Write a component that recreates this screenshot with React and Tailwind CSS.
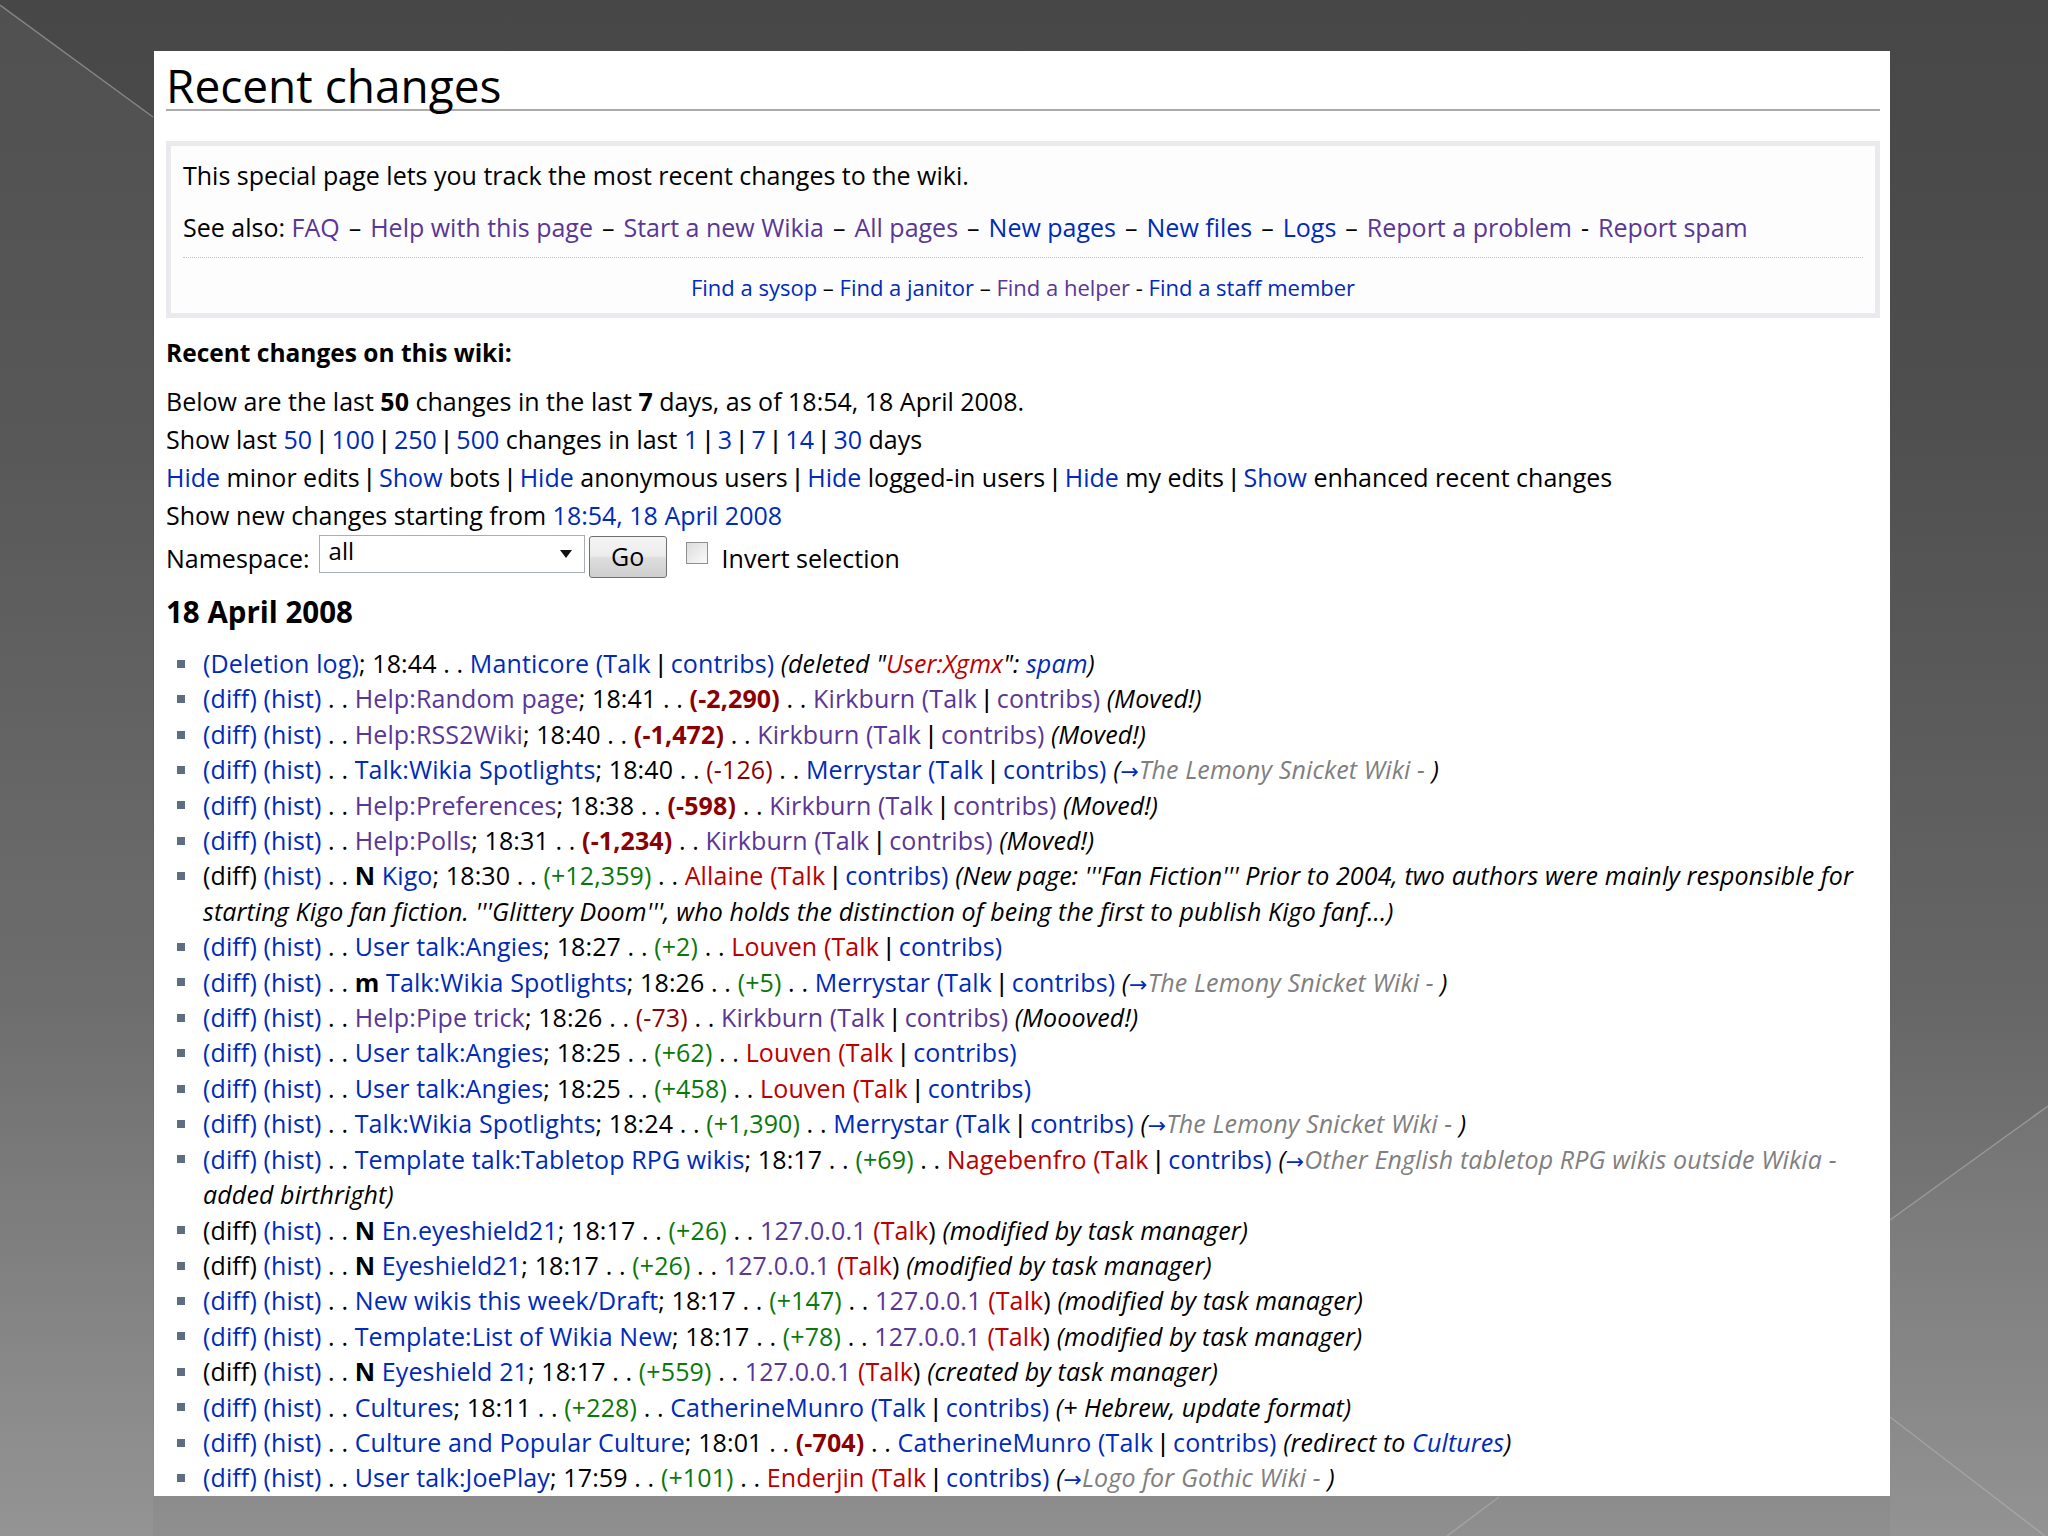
import React from 'react';

// link colours: b = unvisited, v = visited, r = missing page
const tone = {
  b: 'text-[#002bb8]',
  v: 'text-[#5a3696]',
  r: 'text-[#ba0000]',
};

function A({ c = 'b', children }) {
  return <a className={tone[c]}>{children}</a>;
}

// narrow pipe, the Open Sans one is far too wide
function P() {
  return <span className="font-['Liberation_Sans',sans-serif] leading-[0px]">|</span>;
}

function D({ ch = '–' }) {
  return <span className="mx-[2.5px]">{ch}</span>;
}

function Arrow() {
  return (
    <span className="text-[#002bb8] not-italic font-['DejaVu_Sans',sans-serif] text-[22px] leading-[0px]">→</span>
  );
}

function Size({ v, bold }) {
  const neg = v.startsWith('-');
  return (
    <span className={`${neg ? 'text-[#8b0000]' : 'text-[#0a780a]'} ${bold ? 'font-bold' : ''}`}>({v})</span>
  );
}

function Auto({ text }) {
  return (
    <i>
      (<Arrow />
      <span className="text-[#7f7f7f]">{text}</span>)
    </i>
  );
}

const rows = [
  { diff: 'b', title: 'Help:Random page', tc: 'v', time: '18:41', size: '-2,290', bold: true, user: 'Kirkburn', uc: 'v', talk: 'v', contribs: 'v', comment: <i>(Moved!)</i> },
  { diff: 'b', title: 'Help:RSS2Wiki', tc: 'v', time: '18:40', size: '-1,472', bold: true, user: 'Kirkburn', uc: 'v', talk: 'v', contribs: 'v', comment: <i>(Moved!)</i> },
  { diff: 'b', title: 'Talk:Wikia Spotlights', tc: 'b', time: '18:40', size: '-126', user: 'Merrystar', uc: 'b', talk: 'b', contribs: 'b', comment: <Auto text="The Lemony Snicket Wiki - " /> },
  { diff: 'b', title: 'Help:Preferences', tc: 'v', time: '18:38', size: '-598', bold: true, user: 'Kirkburn', uc: 'v', talk: 'v', contribs: 'v', comment: <i>(Moved!)</i> },
  { diff: 'b', title: 'Help:Polls', tc: 'v', time: '18:31', size: '-1,234', bold: true, user: 'Kirkburn', uc: 'v', talk: 'v', contribs: 'v', comment: <i>(Moved!)</i> },
  {
    diff: null, flag: 'N', title: 'Kigo', tc: 'b', time: '18:30', size: '+12,359', user: 'Allaine', uc: 'r', talk: 'r', contribs: 'b',
    comment: (
      <i>
        (New page: '''Fan Fiction''' Prior to 2004, two authors were mainly responsible for starting Kigo fan fiction. '''Glittery Doom''', who holds the distinction of being the first to publish Kigo fanf...)
      </i>
    ),
  },
  { diff: 'b', title: 'User talk:Angies', tc: 'b', time: '18:27', size: '+2', user: 'Louven', uc: 'r', talk: 'r', contribs: 'b' },
  { diff: 'b', flag: 'm', title: 'Talk:Wikia Spotlights', tc: 'b', time: '18:26', size: '+5', user: 'Merrystar', uc: 'b', talk: 'b', contribs: 'b', comment: <Auto text="The Lemony Snicket Wiki - " /> },
  { diff: 'b', title: 'Help:Pipe trick', tc: 'v', time: '18:26', size: '-73', user: 'Kirkburn', uc: 'v', talk: 'v', contribs: 'v', comment: <i>(Moooved!)</i> },
  { diff: 'b', title: 'User talk:Angies', tc: 'b', time: '18:25', size: '+62', user: 'Louven', uc: 'r', talk: 'r', contribs: 'b' },
  { diff: 'b', title: 'User talk:Angies', tc: 'b', time: '18:25', size: '+458', user: 'Louven', uc: 'r', talk: 'r', contribs: 'b' },
  { diff: 'b', title: 'Talk:Wikia Spotlights', tc: 'b', time: '18:24', size: '+1,390', user: 'Merrystar', uc: 'b', talk: 'b', contribs: 'b', comment: <Auto text="The Lemony Snicket Wiki - " /> },
  {
    diff: 'b', title: 'Template talk:Tabletop RPG wikis', tc: 'b', time: '18:17', size: '+69', user: 'Nagebenfro', uc: 'r', talk: 'r', contribs: 'b',
    comment: (
      <i>
        (<Arrow />
        <span className="text-[#7f7f7f]">Other English tabletop RPG wikis outside Wikia -</span> added birthright)
      </i>
    ),
  },
  { diff: null, flag: 'N', title: 'En.eyeshield21', tc: 'b', time: '18:17', size: '+26', user: '127.0.0.1', uc: 'v', talk: 'r', comment: <i>(modified by task manager)</i> },
  { diff: null, flag: 'N', title: 'Eyeshield21', tc: 'b', time: '18:17', size: '+26', user: '127.0.0.1', uc: 'v', talk: 'r', comment: <i>(modified by task manager)</i> },
  { diff: 'b', title: 'New wikis this week/Draft', tc: 'b', time: '18:17', size: '+147', user: '127.0.0.1', uc: 'v', talk: 'r', comment: <i>(modified by task manager)</i> },
  { diff: 'b', title: 'Template:List of Wikia New', tc: 'b', time: '18:17', size: '+78', user: '127.0.0.1', uc: 'v', talk: 'r', comment: <i>(modified by task manager)</i> },
  { diff: null, flag: 'N', title: 'Eyeshield 21', tc: 'b', time: '18:17', size: '+559', user: '127.0.0.1', uc: 'v', talk: 'r', comment: <i>(created by task manager)</i> },
  { diff: 'b', title: 'Cultures', tc: 'b', time: '18:11', size: '+228', user: 'CatherineMunro', uc: 'b', talk: 'b', contribs: 'b', comment: <i>(+ Hebrew, update format)</i> },
  {
    diff: 'b', title: 'Culture and Popular Culture', tc: 'b', time: '18:01', size: '-704', bold: true, user: 'CatherineMunro', uc: 'b', talk: 'b', contribs: 'b',
    comment: (
      <i>
        (redirect to <A>Cultures</A>)
      </i>
    ),
  },
  { diff: 'b', title: 'User talk:JoePlay', tc: 'b', time: '17:59', size: '+101', user: 'Enderjin', uc: 'r', talk: 'r', contribs: 'b', comment: <Auto text="Logo for Gothic Wiki - " /> },
];

function Item({ children }) {
  return (
    <li className="flex">
      <span className="w-[37px] shrink-0 h-[35.4px] flex items-center">
        <span className="ml-[11px] w-[8px] h-[8px] bg-[#5d6e80]" />
      </span>
      <div className="flex-1">{children}</div>
    </li>
  );
}

function Change({ r }) {
  return (
    <Item>
      {r.diff ? <A c={r.diff}>(diff)</A> : '(diff)'} <A>(hist)</A> . .{' '}
      {r.flag && <b>{r.flag} </b>}
      <A c={r.tc}>{r.title}</A>; {r.time} . . <Size v={r.size} bold={r.bold} /> . . <A c={r.uc}>{r.user}</A>{' '}
      <A c={r.talk}>(Talk</A>
      {r.contribs ? (
        <>
          {' '}
          <P />{' '}
          <A c={r.contribs}>contribs)</A>
        </>
      ) : (
        ')'
      )}
      {r.comment && <> {r.comment}</>}
    </Item>
  );
}

function Backdrop() {
  return (
    <svg className="absolute inset-0" width="2048" height="1536" viewBox="0 0 2048 1536">
      <polygon points="0,5 153,117 153,1536 0,1536" fill="#ffffff" fillOpacity="0.05" />
      <polygon points="1890,1220 2048,1106 2048,1536 1890,1536" fill="#ffffff" fillOpacity="0.04" />
      <g stroke="#b4b4b4" strokeOpacity="0.55" strokeWidth="1.5">
        <line x1="0" y1="5" x2="153" y2="117" />
        <line x1="1890" y1="1220" x2="2048" y2="1106" />
        <line x1="1890" y1="1417" x2="2045" y2="1536" />
        <line x1="1499" y1="1497" x2="1447" y2="1536" />
      </g>
    </svg>
  );
}

export default function App() {
  return (
    <div className="relative w-[2048px] h-[1536px] overflow-hidden bg-[linear-gradient(180deg,#474747_0%,#4e4e4e_26%,#666666_65%,#8f8f8f_100%)] font-['Open_Sans',sans-serif]">
      <Backdrop />
      <div className="relative pt-[51px] pl-[154px]">
        <div className="w-[1736px] h-[1445px] bg-white overflow-hidden pl-[12px] pr-[10px] text-[25px] text-black">
          <h1 className="pt-[10px] text-[46px] leading-[48px] border-b-2 border-[#ababab]">Recent changes</h1>

          <div className="mt-[30px] border-[5px] border-[#e9e9ee] bg-[#fdfdfd] px-[12px] pt-[12px] pb-[11px]">
            <p className="leading-[35px]">This special page lets you track the most recent changes to the wiki.</p>
            <p className="mt-[17px] leading-[35px]">
              See also: <A c="v">FAQ</A> <D /> <A c="v">Help with this page</A> <D /> <A c="v">Start a new Wikia</A> <D />{' '}
              <A c="v">All pages</A> <D /> <A>New pages</A> <D /> <A>New files</A> <D /> <A>Logs</A> <D />{' '}
              <A c="v">Report a problem</A> <D ch="-" /> <A c="v">Report spam</A>
            </p>
            <div className="mt-[12px] border-t border-dotted border-[#c4c4c4] pt-[14px] text-center text-[22px] leading-[30px]">
              <A>Find a sysop</A> – <A>Find a janitor</A> – <A c="v">Find a helper</A> - <A>Find a staff member</A>
            </div>
          </div>

          <h2 className="mt-[17px] text-[24.5px] font-bold leading-[35px]">Recent changes on this wiki:</h2>

          <div className="mt-[12px] leading-[38px]">
            <p>
              Below are the last <b>50</b> changes in the last <b>7</b> days, as of 18:54, 18 April 2008.
            </p>
            <p>
              Show last <A>50</A> <P /> <A>100</A> <P /> <A>250</A> <P /> <A>500</A> changes in last <A>1</A> <P /> <A>3</A>{' '}
              <P /> <A>7</A> <P /> <A>14</A> <P /> <A>30</A> days
            </p>
            <p>
              <A>Hide</A> minor edits <P /> <A>Show</A> bots <P /> <A>Hide</A> anonymous users <P /> <A>Hide</A> logged-in users{' '}
              <P /> <A>Hide</A> my edits <P /> <A>Show</A> enhanced recent changes
            </p>
            <p>
              Show new changes starting from <A>18:54, 18 April 2008</A>
            </p>
          </div>

          <div className="flex items-center h-[45px]">
            <span className="mt-[4px]">Namespace:</span>
            <div className="ml-[9px] mb-[5px] w-[266px] h-[38px] border border-[#a9aeb5] bg-white flex items-center justify-between pl-[9px] pr-[12px]">
              <span className="text-[24px] -mt-[6px]">all</span>
              <svg width="12" height="8" viewBox="0 0 12 8">
                <path d="M0 0 L12 0 L6 8 Z" fill="#111" />
              </svg>
            </div>
            <button
              type="button"
              className="ml-[4px] w-[78px] h-[42px] border border-[#707070] rounded-[3px] bg-[linear-gradient(180deg,#f4f4f4_0%,#ececec_48%,#dddddd_52%,#cfcfcf_100%)] text-[25px] leading-none"
            >
              Go
            </button>
            <span className="ml-[19px] mb-[8px] w-[22px] h-[22px] border border-[#8f8f8f] bg-[linear-gradient(135deg,#dcdcdc,#fbfbfb)]" />
            <span className="ml-[14px] mt-[4px]">Invert selection</span>
          </div>

          <h3 className="mt-[15px] text-[29.5px] font-bold leading-[36px]">18 April 2008</h3>

          <ul className="mt-[16px] leading-[35.4px] tracking-[0.12px]">
            <Item>
              <A>(Deletion log)</A>; 18:44 . . <A>Manticore</A> <A>(Talk</A> <P /> <A>contribs)</A>{' '}
              <i>
                (deleted "<A c="r">User:Xgmx</A>": <A>spam</A>)
              </i>
            </Item>
            {rows.map((r, i) => (
              <Change key={i} r={r} />
            ))}
          </ul>
        </div>
      </div>
    </div>
  );
}
